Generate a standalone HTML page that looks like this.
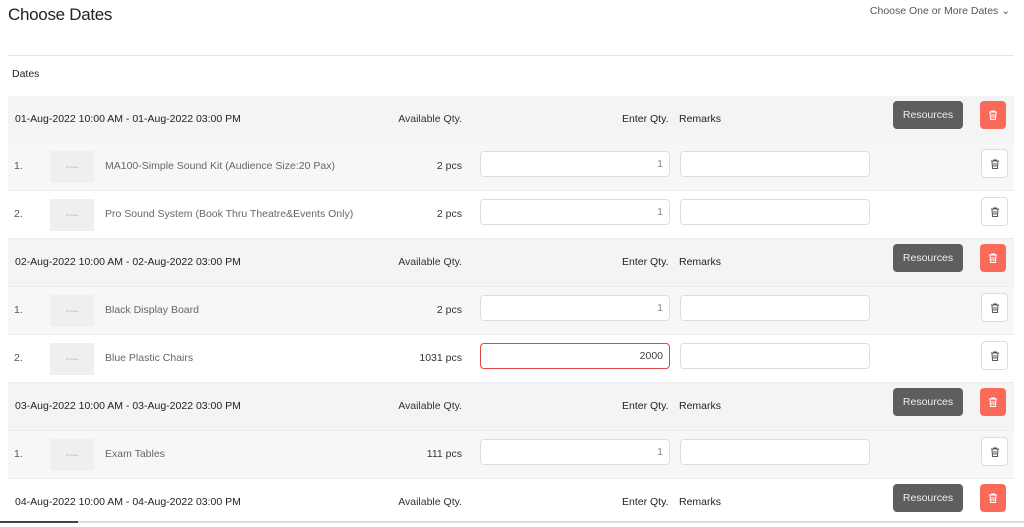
<!DOCTYPE html>
<html><head><meta charset="utf-8"><style>
*{box-sizing:border-box;margin:0;padding:0}
body{width:1024px;height:523px;overflow:hidden;background:#fff;font-family:"Liberation Sans",sans-serif;color:#222;position:relative}
.abs{position:absolute}
h1{position:absolute;left:8px;top:5px;font-size:17px;font-weight:normal;color:#222;letter-spacing:-0.3px}
.dd{position:absolute;right:14px;top:5px;font-size:10.5px;color:#555}
.line{position:absolute;left:8px;width:1006px;top:55px;height:1px;background:#e6e6e6}
.dates{position:absolute;left:12px;top:68px;font-size:10.5px;color:#222}
.row{position:absolute;left:8px;width:1006px;height:48px;border-bottom:1px solid #ececec;font-size:10.5px}
.hd{background:#f4f4f4;color:#222}
.g{background:#f7f7f7}
.w{background:#fff}
.row span{position:absolute;top:17px}
.img{position:absolute;left:42px;top:8px;width:44px;height:32px;background:#efefef;font-size:3px;color:#aaa;text-align:center;line-height:32px}
.name{left:97px;color:#666}
.num{left:6px;color:#555}
.av{right:552px;color:#333;text-align:right}
.inp{position:absolute;top:8px;height:26px;background:#fff;border:1px solid #ddd;border-radius:4px;font-size:10.5px;color:#888;text-align:right;padding:6px 6px 0 0}
.q{left:472px;width:190px}
.r{left:672px;width:190px}
.red{border-color:#e04545;color:#444}
.res{position:absolute;left:885px;top:5px;width:70px;height:28px;background:#5e5e5e;border-radius:4px;color:#eee;font-size:10.5px;text-align:center;line-height:28px}
.del{position:absolute;left:972px;top:5px;width:26px;height:28px;background:#fa6a5b;border-radius:4px}
.wd{position:absolute;left:973px;top:6px;width:27px;height:29px;background:#fff;border:1px solid #ddd;border-radius:4px}
.del svg,.wd svg{position:absolute;left:8px;top:9px}
</style></head><body>
<h1>Choose Dates</h1>
<div class="dd">Choose One or More Dates &#8964;</div>
<div class="line"></div>
<div class="dates">Dates</div>

<div class="row hd" style="top:96px"><span style="left:7px">01-Aug-2022 10:00 AM - 01-Aug-2022 03:00 PM</span><span class="av">Available Qty.</span><span style="left:614px">Enter Qty.</span><span style="left:671px">Remarks</span><div class="res">Resources</div><div class="del"><svg width="10" height="10" viewBox="0 0 10 10"><path d="M1 2h8M3.5 2V1h3v1M2 2.5l.6 7h4.8l.6-7M4 4v4M6 4v4" stroke="#fff" stroke-width="1" fill="none"/></svg></div></div>
<div class="row g" style="top:143px"><span class="num">1.</span><div class="img">no image</div><span class="name">MA100-Simple Sound Kit (Audience Size:20 Pax)</span><span class="av">2 pcs</span><div class="inp q">1</div><div class="inp r"></div><div class="wd"><svg width="10" height="10" viewBox="0 0 10 10"><path d="M1 2h8M3.5 2V1h3v1M2 2.5l.6 7h4.8l.6-7M4 4v4M6 4v4" stroke="#555" stroke-width="1" fill="none"/></svg></div></div>
<div class="row w" style="top:191px"><span class="num">2.</span><div class="img">no image</div><span class="name">Pro Sound System (Book Thru Theatre&amp;Events Only)</span><span class="av">2 pcs</span><div class="inp q">1</div><div class="inp r"></div><div class="wd"><svg width="10" height="10" viewBox="0 0 10 10"><path d="M1 2h8M3.5 2V1h3v1M2 2.5l.6 7h4.8l.6-7M4 4v4M6 4v4" stroke="#555" stroke-width="1" fill="none"/></svg></div></div>

<div class="row hd" style="top:239px"><span style="left:7px">02-Aug-2022 10:00 AM - 02-Aug-2022 03:00 PM</span><span class="av">Available Qty.</span><span style="left:614px">Enter Qty.</span><span style="left:671px">Remarks</span><div class="res">Resources</div><div class="del"><svg width="10" height="10" viewBox="0 0 10 10"><path d="M1 2h8M3.5 2V1h3v1M2 2.5l.6 7h4.8l.6-7M4 4v4M6 4v4" stroke="#fff" stroke-width="1" fill="none"/></svg></div></div>
<div class="row g" style="top:287px"><span class="num">1.</span><div class="img">no image</div><span class="name">Black Display Board</span><span class="av">2 pcs</span><div class="inp q">1</div><div class="inp r"></div><div class="wd"><svg width="10" height="10" viewBox="0 0 10 10"><path d="M1 2h8M3.5 2V1h3v1M2 2.5l.6 7h4.8l.6-7M4 4v4M6 4v4" stroke="#555" stroke-width="1" fill="none"/></svg></div></div>
<div class="row w" style="top:335px"><span class="num">2.</span><div class="img">no image</div><span class="name">Blue Plastic Chairs</span><span class="av">1031 pcs</span><div class="inp q red">2000</div><div class="inp r"></div><div class="wd"><svg width="10" height="10" viewBox="0 0 10 10"><path d="M1 2h8M3.5 2V1h3v1M2 2.5l.6 7h4.8l.6-7M4 4v4M6 4v4" stroke="#555" stroke-width="1" fill="none"/></svg></div></div>

<div class="row hd" style="top:383px"><span style="left:7px">03-Aug-2022 10:00 AM - 03-Aug-2022 03:00 PM</span><span class="av">Available Qty.</span><span style="left:614px">Enter Qty.</span><span style="left:671px">Remarks</span><div class="res">Resources</div><div class="del"><svg width="10" height="10" viewBox="0 0 10 10"><path d="M1 2h8M3.5 2V1h3v1M2 2.5l.6 7h4.8l.6-7M4 4v4M6 4v4" stroke="#fff" stroke-width="1" fill="none"/></svg></div></div>
<div class="row g" style="top:431px"><span class="num">1.</span><div class="img">no image</div><span class="name">Exam Tables</span><span class="av">111 pcs</span><div class="inp q">1</div><div class="inp r"></div><div class="wd"><svg width="10" height="10" viewBox="0 0 10 10"><path d="M1 2h8M3.5 2V1h3v1M2 2.5l.6 7h4.8l.6-7M4 4v4M6 4v4" stroke="#555" stroke-width="1" fill="none"/></svg></div></div>

<div class="row w" style="top:479px;border:none"><span style="left:7px">04-Aug-2022 10:00 AM - 04-Aug-2022 03:00 PM</span><span class="av">Available Qty.</span><span style="left:614px">Enter Qty.</span><span style="left:671px">Remarks</span><div class="res">Resources</div><div class="del"><svg width="10" height="10" viewBox="0 0 10 10"><path d="M1 2h8M3.5 2V1h3v1M2 2.5l.6 7h4.8l.6-7M4 4v4M6 4v4" stroke="#fff" stroke-width="1" fill="none"/></svg></div></div>
<div class="abs" style="left:0;top:521px;width:78px;height:2px;background:#444"></div>
<div class="abs" style="left:78px;top:521px;width:946px;height:2px;background:#ddd"></div>
</body></html>
